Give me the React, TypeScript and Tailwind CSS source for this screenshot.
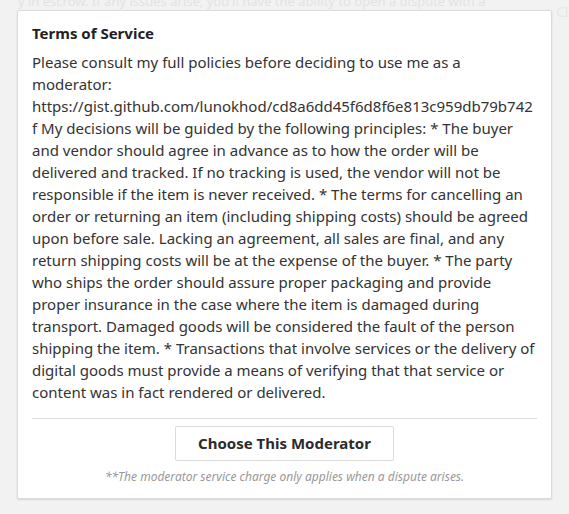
import React from "react";

export default function App() {
  const font = { fontFamily: '"Noto Sans", "Open Sans", sans-serif' };
  return (
    <div
      className="relative w-[569px] h-[514px] overflow-hidden bg-[#f2f2f2]"
      style={font}
    >
      {/* faint page content behind the modal */}
      <div className="absolute top-[-9px] left-[18px] text-[13px] leading-[20px] text-[#e3e3e3] whitespace-nowrap">
        y in escrow. If any issues arise, you'll have the ability to open a dispute with a
      </div>
      <div className="absolute top-[2px] left-[556px] text-[14px] leading-[20px] text-[#e8e8e8] whitespace-nowrap">
        Clic
      </div>

      <div className="relative pt-[10px] pl-[17px] w-[552px]">
        <div className="bg-white border border-[#dcdcdc] rounded-[2px] shadow-[0_1px_2px_rgba(0,0,0,0.12)] px-[14px] pt-[11px] pb-[12px]">
          <h2 className="text-[15px] leading-[22px] font-bold text-[#222]">
            Terms of Service
          </h2>
          <p className="mt-[7px] text-[15px] leading-[22px] text-[#333] break-words">
            Please consult my full policies before deciding to use me as a
            moderator:
            https://gist.github.com/lunokhod/cd8a6dd45f6d8f6e813c959db79b742f
            My decisions will be guided by the following principles: * The
            buyer and vendor should agree in advance as to how the order will
            be delivered and tracked. If no tracking is used, the vendor will
            not be responsible if the item is never received. * The terms for
            cancelling an order or returning an item (including shipping costs)
            should be agreed upon before sale. Lacking an agreement, all sales
            are final, and any return shipping costs will be at the expense of
            the buyer. * The party who ships the order should assure proper
            packaging and provide proper insurance in the case where the item
            is damaged during transport. Damaged goods will be considered the
            fault of the person shipping the item. * Transactions that involve
            services or the delivery of digital goods must provide a means of
            verifying that that service or content was in fact rendered or
            delivered.
          </p>
          <div className="mt-[15px] border-t border-[#dedede]" />
          <div className="flex justify-center mt-[7px]">
            <button className="w-[219px] h-[35px] border border-[#dcdcdc] rounded-[2px] bg-white text-[15px] font-bold text-[#2b2b2b]">
              Choose This Moderator
            </button>
          </div>
          <p className="mt-[7px] text-center text-[12px] leading-[18px] italic text-[#999]">
            **The moderator service charge only applies when a dispute arises.
          </p>
        </div>
      </div>
    </div>
  );
}
